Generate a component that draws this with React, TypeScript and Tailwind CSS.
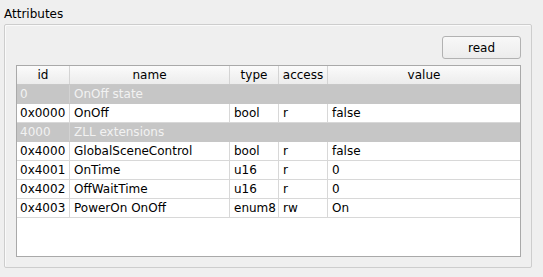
import React from "react";

type Row = {
  id: string;
  name: string;
  type?: string;
  access?: string;
  value?: string;
  section?: boolean;
};

const rows: Row[] = [
  { id: "0", name: "OnOff state", section: true },
  { id: "0x0000", name: "OnOff", type: "bool", access: "r", value: "false" },
  { id: "4000", name: "ZLL extensions", section: true },
  { id: "0x4000", name: "GlobalSceneControl", type: "bool", access: "r", value: "false" },
  { id: "0x4001", name: "OnTime", type: "u16", access: "r", value: "0" },
  { id: "0x4002", name: "OffWaitTime", type: "u16", access: "r", value: "0" },
  { id: "0x4003", name: "PowerOn OnOff", type: "enum8", access: "rw", value: "On" },
];

const headers = ["id", "name", "type", "access", "value"];
const cols = "grid grid-cols-[53px_160px_49px_49px_192px]";

export default function App() {
  return (
    <div
      className="w-[543px] h-[277px] bg-[#efefef] text-[12px] text-black overflow-hidden"
      style={{ fontFamily: '"DejaVu Sans", sans-serif' }}
    >
      <div className="pl-[4px] pt-[7px] h-[24px] leading-[14px]">Attributes</div>
      <div className="ml-[4px] w-[528px] h-[244px] border border-[#cdcdcd] rounded-[2px] shadow-[inset_1px_1px_0_#fafafa] pt-[11px] pl-[11px] pr-[10px] flex flex-col">
        <div className="flex justify-end">
          <button className="w-[79px] h-[23px] border border-[#b2b2b2] rounded-[3px] bg-gradient-to-b from-[#f8f8f8] to-[#ececec] leading-[20px]">
            read
          </button>
        </div>
        <div className="mt-[6px] w-[505px] h-[192px] border border-[#a9a9a9] bg-white">
          <div className={`${cols} h-[19px] border-b border-[#c8c8c8] bg-gradient-to-b from-[#fbfbfb] to-[#ececec]`}>
            {headers.map((h, i) => (
              <div
                key={h}
                className={`text-center leading-[18px] ${i < 4 ? "border-r border-[#d4d4d4]" : ""}`}
              >
                {h}
              </div>
            ))}
          </div>
          {rows.map((r) => (
            <div
              key={r.id}
              className={`${cols} h-[19px] border-b ${
                r.section ? "bg-[#c6c6c6] text-[#f2f2f2] border-[#c6c6c6]" : "border-[#d8d8d8]"
              }`}
            >
              {[r.id, r.name, r.type ?? "", r.access ?? "", r.value ?? ""].map((c, i) => (
                <div
                  key={i}
                  className={`leading-[18px] whitespace-nowrap overflow-hidden ${
                    i === 0 ? "pl-[3px]" : "pl-[4px]"
                  } ${
                    i < 4
                      ? r.section
                        ? i === 0
                          ? "border-r border-[#d2d2d2]"
                          : ""
                        : "border-r border-[#d8d8d8]"
                      : ""
                  }`}
                >
                  {c}
                </div>
              ))}
            </div>
          ))}
        </div>
      </div>
    </div>
  );
}
